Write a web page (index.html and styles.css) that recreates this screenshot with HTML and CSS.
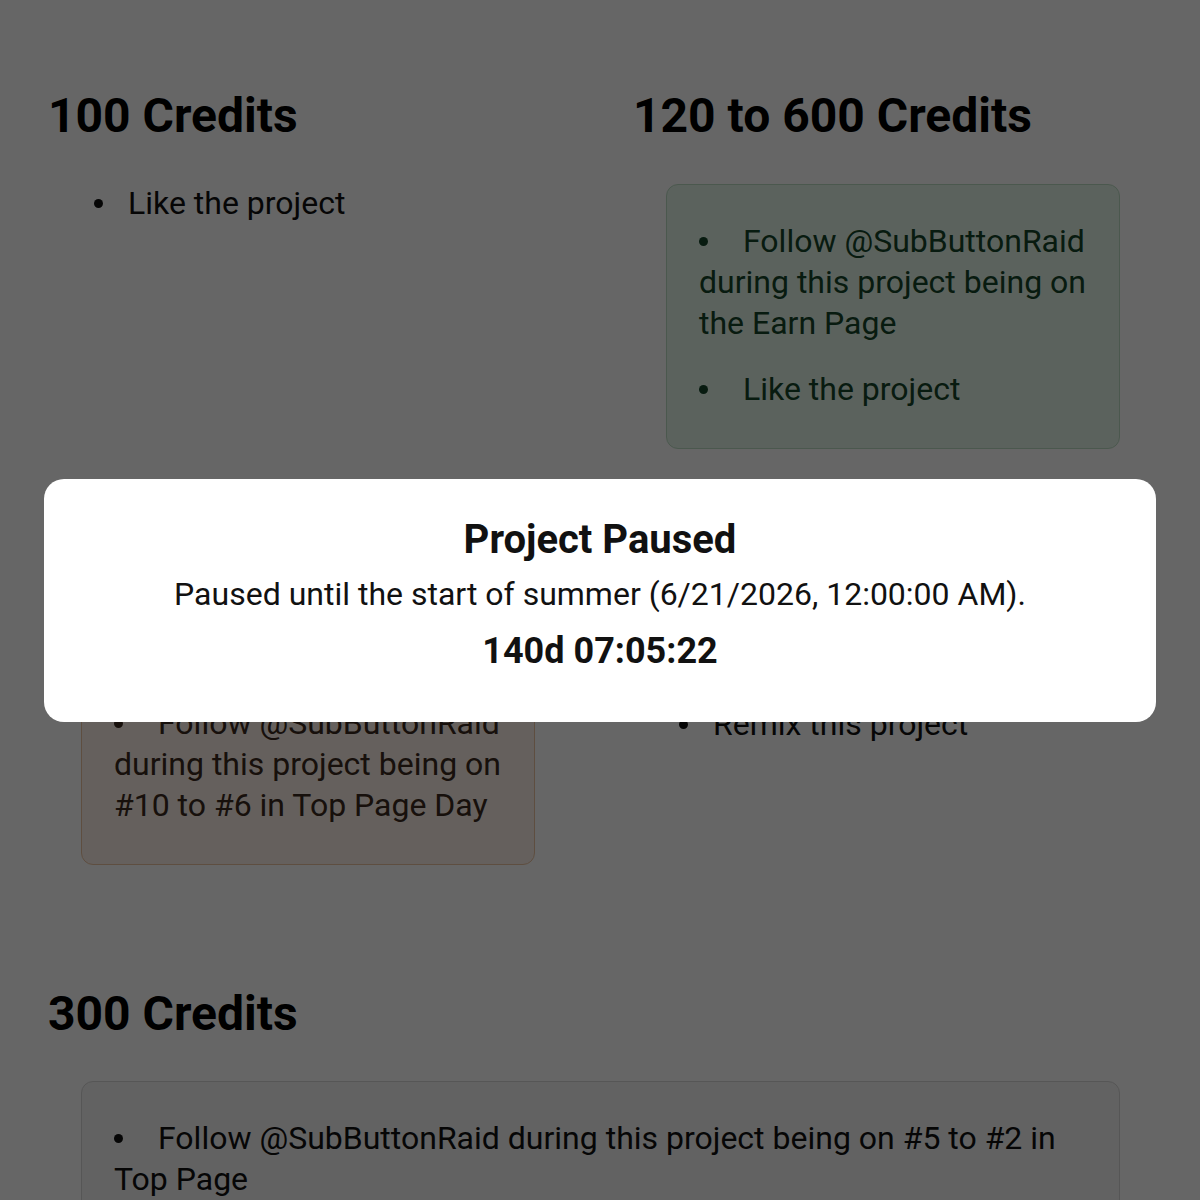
FILE: index.html
```html
<!DOCTYPE html>
<html lang="en">
<head>
  <meta charset="UTF-8" />
  <meta name="viewport" content="width=device-width, initial-scale=1.0"/>
  <title>Earn Credits</title>
  <link rel="stylesheet" href="styles.css">
</head>
<body>
  <main class="page">
    <div class="tiers">
      <section class="tier">
        <h2>100 Credits</h2>
        <ul class="plain">
          <li>Like the project</li>
        </ul>
      </section>

      <section class="tier">
        <h2>120 to 600 Credits</h2>
        <div class="box green">
          <ul>
            <li>Follow @SubButtonRaid during this project being on the Earn Page</li>
            <li>Like the project</li>
          </ul>
        </div>
      </section>

      <section class="tier">
        <h2>200 Credits</h2>
        <div class="box orange">
          <ul>
            <li>Follow @SubButtonRaid during this project being on #10 to #6 in Top Page Day</li>
          </ul>
        </div>
      </section>

      <section class="tier">
        <h2>150 Credits</h2>
        <ul class="plain low">
          <li>Remix this project</li>
        </ul>
      </section>
    </div>

    <section class="tier wide">
      <h2>300 Credits</h2>
      <div class="box grey">
        <ul>
          <li>Follow @SubButtonRaid during this project being on #5 to #2 in Top Page</li>
        </ul>
      </div>
    </section>
  </main>

  <div class="overlay">
    <div class="modal">
      <h3>Project Paused</h3>
      <p>Paused until the start of summer (6/21/2026, 12:00:00 AM).</p>
      <div class="countdown">140d 07:05:22</div>
    </div>
  </div>
</body>
</html>
```

FILE: styles.css
```css
body {
  margin: 0;
  font-family: Roboto, "Noto Sans", sans-serif;
  background: #fff;
  color: #111;
}

.page {
  padding: 88px 48px 80px;
}

.tiers {
  display: grid;
  grid-template-columns: 1fr 1fr;
  column-gap: 66px;
  row-gap: 121px;
  align-items: start;
}

h2 {
  margin: 0;
  font-size: 48px;
  line-height: 56px;
  font-weight: 700;
  color: #000;
}

ul {
  list-style: none;
  margin: 0;
  padding: 0;
  font-size: 32px;
  line-height: 41px;
}

li::before {
  content: "";
  display: inline-block;
  width: 9px;
  height: 9px;
  border-radius: 50%;
  background: currentColor;
  vertical-align: middle;
  margin-right: 35px;
  position: relative;
  top: -2px;
}

.plain {
  margin-top: 39px;
  padding-left: 46px;
}

.plain li::before {
  margin-right: 25px;
}

.plain.low {
  margin-top: 78px;
}

.box {
  margin: 40px 32px 0 33px;
  padding: 36px 32px 38px;
  border: 1px solid;
  border-radius: 12px;
}

.box ul {
  display: flex;
  flex-direction: column;
  gap: 25px;
}

.green {
  background: #e4f6e8;
  border-color: #bcdcc4;
  color: #14452a;
}

.orange {
  background: #fcf1e8;
  border-color: #ecc2a0;
  color: #3b2a20;
}

.grey {
  background: #f5f5f5;
  border-color: #d6d6d6;
}

.wide {
  margin-top: 121px;
}

.wide .box {
  margin-top: 39px;
}

.overlay {
  position: fixed;
  inset: 0;
  background: rgba(0, 0, 0, 0.6);
  display: flex;
  align-items: center;
  justify-content: center;
  padding: 0 44px;
}

.modal {
  width: 100%;
  height: 243px;
  background: #fff;
  border-radius: 20px;
  padding: 37px 40px 0;
  text-align: center;
  box-sizing: border-box;
  color: #111;
}

.modal h3 {
  margin: 0;
  font-size: 40px;
  font-weight: 700;
}

.modal p {
  margin: 12px 0 0;
  font-size: 32px;
}

.countdown {
  margin-top: 17px;
  font-size: 36px;
  font-weight: 700;
}
```
